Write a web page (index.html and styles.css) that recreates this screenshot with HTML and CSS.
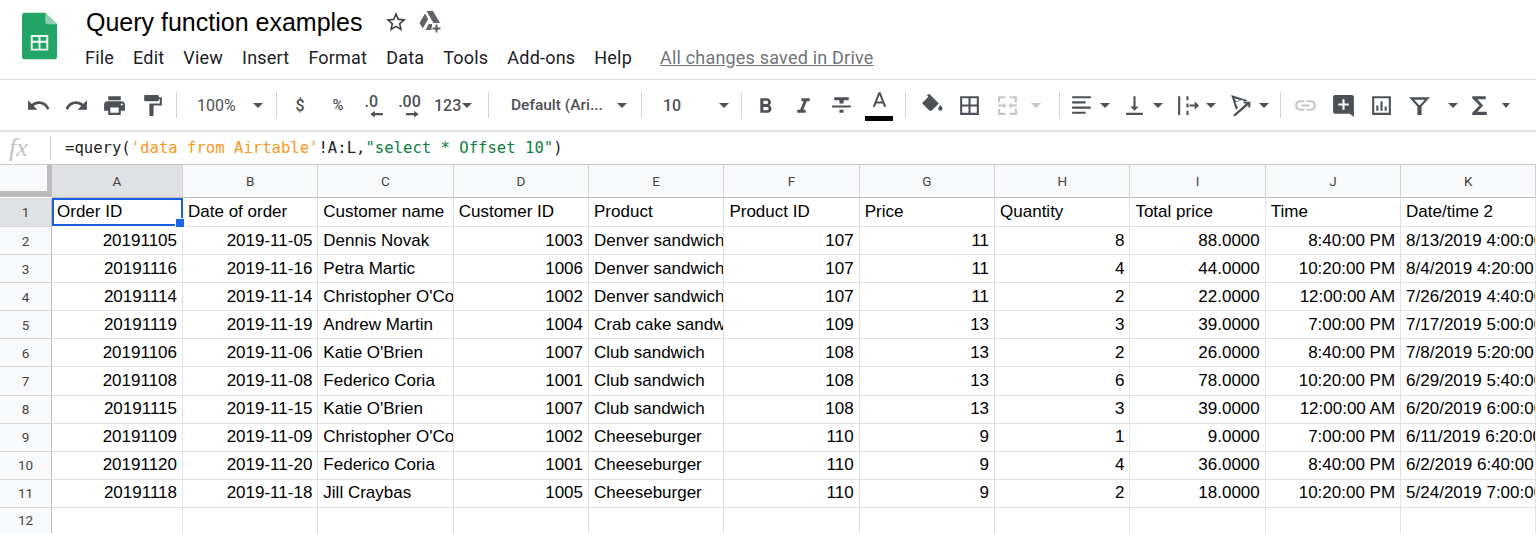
FILE: index.html
```html
<!DOCTYPE html>
<html lang="en">
<head>
<meta charset="utf-8">
<title>Query function examples</title>
<link rel="stylesheet" href="styles.css">
</head>
<body>
<header class="top">
  <svg class="logo" viewBox="0 0 36 48" aria-hidden="true">
    <path d="M3 0H24L36 12V45a3 3 0 0 1-3 3H3a3 3 0 0 1-3-3V3a3 3 0 0 1 3-3z" fill="#23a566"/>
    <path d="M24 0L36 12H27a3 3 0 0 1-3-3z" fill="#8ed1b1"/>
    <path d="M9 23H27V39H9zM11 25V29H17V25zM19 25V29H25V25zM11 31V37H17V31zM19 31V37H25V31z" fill="#f1f8f4" fill-rule="evenodd"/>
  </svg>
  <div class="titles">
    <div class="title-row">
      <span class="doc-name">Query function examples</span>
      <svg class="star" viewBox="0 0 24 24"><path d="M22 9.24l-7.19-.62L12 2 9.19 8.63 2 9.24l5.46 4.73L5.82 21 12 17.27 18.18 21l-1.63-7.03L22 9.24zM12 15.4l-3.76 2.27 1-4.28-3.32-2.88 4.38-.38L12 6.1l1.71 4.04 4.38.38-3.32 2.88 1 4.28L12 15.4z"/></svg>
      <svg class="move" viewBox="0 0 24 24"><path d="M8.5 1H15L22 13H15.4zM7 3.5L10.2 9 4.8 18.5 1.5 13zM7.5 20L10.8 14H14V20z"/><path d="M17 14H20V17H23V20H20V23H17V20H14V17H17z" stroke="#fff" stroke-width="1"/></svg>
    </div>
    <nav class="menu">
      <span>File</span><span>Edit</span><span>View</span><span>Insert</span><span>Format</span><span>Data</span><span>Tools</span><span>Add-ons</span><span>Help</span>
      <a class="saved">All changes saved in Drive</a>
    </nav>
  </div>
</header>

<div class="toolbar">
  <div class="grp g1">
    <span class="btn"><svg viewBox="0 0 24 24"><path d="M12.5 8c-2.65 0-5.05.99-6.9 2.6L2 7v9h9l-3.62-3.62c1.39-1.16 3.16-1.88 5.12-1.88 3.54 0 6.55 2.31 7.6 5.5l2.37-.78C21.08 11.03 17.15 8 12.5 8z"/></svg></span>
    <span class="btn"><svg viewBox="0 0 24 24"><path d="M18.4 10.6C16.55 8.99 14.15 8 11.5 8c-4.65 0-8.58 3.03-9.96 7.22L3.9 16c1.05-3.19 4.05-5.5 7.6-5.5 1.95 0 3.73.72 5.12 1.88L13 16h9V7l-3.6 3.6z"/></svg></span>
    <span class="btn"><svg viewBox="0 0 24 24"><path d="M19 8H5c-1.66 0-3 1.34-3 3v6h4v4h12v-4h4v-6c0-1.66-1.34-3-3-3zm-3 11H8v-5h8v5zm3-7c-.55 0-1-.45-1-1s.45-1 1-1 1 .45 1 1-.45 1-1 1zm-1-9H6v4h12V3z"/></svg></span>
    <span class="btn"><svg viewBox="0 0 24 24"><path d="M18 4V3c0-.55-.45-1-1-1H5c-.55 0-1 .45-1 1v4c0 .55.45 1 1 1h12c.55 0 1-.45 1-1V6h1v4H9v11c0 .55.45 1 1 1h2c.55 0 1-.45 1-1v-9h8V4h-3z"/></svg></span>
  </div>
  <div class="grp g2"><span class="val zoomv">100%</span><i class="arr"></i></div>
  <div class="grp g3">
    <span class="btn txt">$</span>
    <span class="btn txt pct">%</span>
    <span class="btn dec"><svg viewBox="0 0 28 28"><text x="4" y="16" class="dectext">.0</text><path d="M9 22l4-3v2h7v2h-7v2z"/></svg></span>
    <span class="btn dec"><svg viewBox="0 0 28 28"><text x="1" y="16" class="dectext">.00</text><path d="M19 22l-4-3v2H8v2h7v2z"/></svg></span>
    <span class="fmt">123</span><i class="arr"></i>
  </div>
  <div class="grp g4"><span class="val">Default (Ari...</span><i class="arr"></i></div>
  <div class="grp g5"><span class="val">10</span><i class="arr"></i></div>
  <div class="grp g6">
    <span class="btn"><svg viewBox="0 0 24 24"><path d="M15.6 11.8c1-.7 1.65-1.8 1.65-2.8 0-2.25-1.75-4-4-4H7v14h7.04c2.1 0 3.71-1.7 3.71-3.79 0-1.52-.86-2.82-2.15-3.41zM10 7.5h3c.83 0 1.5.67 1.5 1.5s-.67 1.5-1.5 1.5h-3v-3zm3.5 9H10v-3h3.5c.83 0 1.5.67 1.5 1.5s-.67 1.5-1.5 1.5z"/></svg></span>
    <span class="btn"><svg viewBox="0 0 24 24"><path d="M10 5v3h2.21l-3.42 8H6v3h8v-3h-2.21l3.42-8H18V5z"/></svg></span>
    <span class="btn"><svg viewBox="0 0 24 24"><path d="M10 19h4v-3h-4v3zM5 4v3h5v3h4V7h5V4H5zM3 14h18v-2H3v2z"/></svg></span>
    <span class="btn color"><svg viewBox="0 0 24 24"><path d="M11 3L5.5 17h2.25l1.12-3h6.25l1.12 3h2.25L13 3h-2zm-1.38 9L12 5.67 14.38 12H9.62z"/></svg><b class="swatch"></b></span>
  </div>
  <div class="grp g7">
    <span class="btn"><svg viewBox="0 0 24 24"><path d="M10 1l9 9-6.5 6.5a2 2 0 0 1-2.8 0L3.5 10.3a.9.9 0 0 1 0-1.3L9 3.5 7.5 2z"/><path d="M20.500 11.500s-2 2.200-2 3.500a2 2 0 0 0 4 0c0-1.300-2-3.500-2-3.500z"/></svg></span>
    <span class="btn"><svg viewBox="0 0 24 24"><path d="M3 3v18h18V3H3zm8 16H5v-6h6v6zm0-8H5V5h6v6zm8 8h-6v-6h6v6zm0-8h-6V5h6v6z"/></svg></span>
    <span class="btn off"><svg viewBox="0 0 24 24"><path d="M3 3h7v2H5v4H3zM14 3h7v6h-2V5h-5zM3 15h2v4h5v2H3zM19 15h2v6h-7v-2h5zM3 11h5V9l3 3-3 3v-2H3zM21 11h-5V9l-3 3 3 3v-2h5z"/></svg></span>
    <i class="arr off merge-arr"></i>
  </div>
  <div class="grp g8">
    <span class="dd"><svg viewBox="0 0 24 24"><path d="M3 3h18v2H3zM3 8h13v2H3zM3 13h18v2H3zM3 18h13v2H3z"/></svg><i class="arr"></i></span>
    <span class="dd"><svg viewBox="0 0 24 24"><path d="M16 13h-3V3h-2v10H8l4 4 4-4zM4 19v2h16v-2H4z"/></svg><i class="arr"></i></span>
    <span class="dd"><svg viewBox="0 0 24 24"><path d="M3 3h2v18H3zM11 3h2v4h-2zM11 10h2v4h-2zM11 17h2v4h-2zM14 11h5V8l4 4-4 4v-3h-5z"/></svg><i class="arr"></i></span>
    <span class="dd"><svg viewBox="0 0 24 24"><path d="M3 2l16 5-3.200 1.500-2.200-2-6.500 2.600 2.500 5-2 2zM6 5l2 3.200 3.500-1.400zM21.500 8.500V14h-2v-2.500L6.500 22.500 5 21 17.500 10H15V8.500z"/></svg><i class="arr"></i></span>
  </div>
  <div class="grp g9">
    <span class="btn off wide"><svg viewBox="0 0 24 24"><path d="M3.900 12c0-1.710 1.390-3.100 3.100-3.100h4V7H7c-2.760 0-5 2.240-5 5s2.240 5 5 5h4v-1.900H7c-1.710 0-3.100-1.390-3.100-3.100zM8 13h8v-2H8v2zm9-6h-4v1.900h4c1.710 0 3.100 1.390 3.100 3.100s-1.390 3.100-3.100 3.100h-4V17h4c2.760 0 5-2.240 5-5s-2.240-5-5-5z"/></svg></span>
    <span class="btn"><svg viewBox="0 0 24 24"><path d="M21.990 4c0-1.100-.89-2-1.990-2H4c-1.100 0-2 .9-2 2v14c0 1.100.9 2 2 2h14l4 3zM17 12h-4v4h-2v-4H7v-2h4V6h2v4h4z"/></svg></span>
    <span class="btn"><svg viewBox="0 0 24 24"><path d="M3 3h18v18H3zM5 5v14h14V5zM7 12h2v5H7zM11 8h2v9h-2zM15 13h2v4h-2z" fill-rule="evenodd"/></svg></span>
    <span class="btn"><svg viewBox="0 0 24 24"><path d="M2 4H22L14 13V21H10V13zM7 6.500L11.500 11.500H12.500L17 6.500z" fill-rule="evenodd"/></svg></span>
    <i class="arr filter-arr"></i>
    <span class="btn sigma"><svg viewBox="0 0 24 24"><path d="M18 3H5v2l7 7-7 7v2h14v-3h-9l5.500-6L10 6h8z"/></svg></span>
    <i class="arr sum-arr"></i>
  </div>
</div>

<div class="formula">
  <span class="fx">fx</span>
  <code class="expr">=query(<span class="str">'data from Airtable'</span>!A:L,<span class="str2">"select * Offset 10"</span>)</code>
</div>

<div class="sheet">
  <div class="corner"></div>
  <div class="ch sel">A</div><div class="ch">B</div><div class="ch">C</div><div class="ch">D</div><div class="ch">E</div><div class="ch">F</div><div class="ch">G</div><div class="ch">H</div><div class="ch">I</div><div class="ch">J</div><div class="ch">K</div>

  <div class="rh sel first">1</div>
  <div class="c active first">Order ID</div><div class="c first">Date of order</div><div class="c first">Customer name</div><div class="c first">Customer ID</div><div class="c first">Product</div><div class="c first">Product ID</div><div class="c first">Price</div><div class="c first">Quantity</div><div class="c first">Total price</div><div class="c first">Time</div><div class="c first">Date/time 2</div>

  <div class="rh">2</div>
  <div class="c n">20191105</div><div class="c n">2019-11-05</div><div class="c">Dennis Novak</div><div class="c n">1003</div><div class="c">Denver sandwich</div><div class="c n">107</div><div class="c n">11</div><div class="c n">8</div><div class="c n">88.0000</div><div class="c n">8:40:00 PM</div><div class="c">8/13/2019 4:00:00</div>

  <div class="rh">3</div>
  <div class="c n">20191116</div><div class="c n">2019-11-16</div><div class="c">Petra Martic</div><div class="c n">1006</div><div class="c">Denver sandwich</div><div class="c n">107</div><div class="c n">11</div><div class="c n">4</div><div class="c n">44.0000</div><div class="c n">10:20:00 PM</div><div class="c">8/4/2019 4:20:00</div>

  <div class="rh">4</div>
  <div class="c n">20191114</div><div class="c n">2019-11-14</div><div class="c">Christopher O'Connor</div><div class="c n">1002</div><div class="c">Denver sandwich</div><div class="c n">107</div><div class="c n">11</div><div class="c n">2</div><div class="c n">22.0000</div><div class="c n">12:00:00 AM</div><div class="c">7/26/2019 4:40:00</div>

  <div class="rh">5</div>
  <div class="c n">20191119</div><div class="c n">2019-11-19</div><div class="c">Andrew Martin</div><div class="c n">1004</div><div class="c">Crab cake sandwich</div><div class="c n">109</div><div class="c n">13</div><div class="c n">3</div><div class="c n">39.0000</div><div class="c n">7:00:00 PM</div><div class="c">7/17/2019 5:00:00</div>

  <div class="rh">6</div>
  <div class="c n">20191106</div><div class="c n">2019-11-06</div><div class="c">Katie O'Brien</div><div class="c n">1007</div><div class="c">Club sandwich</div><div class="c n">108</div><div class="c n">13</div><div class="c n">2</div><div class="c n">26.0000</div><div class="c n">8:40:00 PM</div><div class="c">7/8/2019 5:20:00</div>

  <div class="rh">7</div>
  <div class="c n">20191108</div><div class="c n">2019-11-08</div><div class="c">Federico Coria</div><div class="c n">1001</div><div class="c">Club sandwich</div><div class="c n">108</div><div class="c n">13</div><div class="c n">6</div><div class="c n">78.0000</div><div class="c n">10:20:00 PM</div><div class="c">6/29/2019 5:40:00</div>

  <div class="rh">8</div>
  <div class="c n">20191115</div><div class="c n">2019-11-15</div><div class="c">Katie O'Brien</div><div class="c n">1007</div><div class="c">Club sandwich</div><div class="c n">108</div><div class="c n">13</div><div class="c n">3</div><div class="c n">39.0000</div><div class="c n">12:00:00 AM</div><div class="c">6/20/2019 6:00:00</div>

  <div class="rh">9</div>
  <div class="c n">20191109</div><div class="c n">2019-11-09</div><div class="c">Christopher O'Connor</div><div class="c n">1002</div><div class="c">Cheeseburger</div><div class="c n">110</div><div class="c n">9</div><div class="c n">1</div><div class="c n">9.0000</div><div class="c n">7:00:00 PM</div><div class="c">6/11/2019 6:20:00</div>

  <div class="rh">10</div>
  <div class="c n">20191120</div><div class="c n">2019-11-20</div><div class="c">Federico Coria</div><div class="c n">1001</div><div class="c">Cheeseburger</div><div class="c n">110</div><div class="c n">9</div><div class="c n">4</div><div class="c n">36.0000</div><div class="c n">8:40:00 PM</div><div class="c">6/2/2019 6:40:00</div>

  <div class="rh">11</div>
  <div class="c n">20191118</div><div class="c n">2019-11-18</div><div class="c">Jill Craybas</div><div class="c n">1005</div><div class="c">Cheeseburger</div><div class="c n">110</div><div class="c n">9</div><div class="c n">2</div><div class="c n">18.0000</div><div class="c n">10:20:00 PM</div><div class="c">5/24/2019 7:00:00</div>

  <div class="rh">12</div>
  <div class="c"></div><div class="c"></div><div class="c"></div><div class="c"></div><div class="c"></div><div class="c"></div><div class="c"></div><div class="c"></div><div class="c"></div><div class="c"></div><div class="c"></div>
</div>
</body>
</html>
```

FILE: styles.css
```css
* { box-sizing: border-box; }
html, body { margin: 0; height: 533px; overflow: hidden; background: #fff; }
body { font-family: "Roboto", "Liberation Sans", sans-serif; color: #000; width: 1536px; }

/* title area */
.top { height: 80px; display: flex; align-items: flex-start; border-bottom: 1px solid #dadada; padding: 12px 0 0 22px; }
.logo { width: 35px; height: 48px; flex: none; }
.titles { margin-left: 29px; margin-top: -4px; }
.title-row { display: flex; align-items: center; height: 28px; }
.doc-name { font-family: "Liberation Sans", sans-serif; font-size: 25px; line-height: 28px; width: 298px; white-space: nowrap; }
.star { width: 24px; height: 24px; fill: #3c4043; }
.move { width: 24px; height: 24px; fill: #5f6368; margin-left: 10px; }
.menu { display: flex; align-items: center; margin-top: 10px; margin-left: -1px; font-size: 18px; line-height: 24px; color: #202124; letter-spacing: .2px; gap: 19px; white-space: nowrap; }
.saved { margin-left: 9px; color: #70757a; text-decoration: underline; }

/* toolbar */
.toolbar { height: 52px; display: flex; align-items: center; padding-left: 19px; border-bottom: 2px solid #e3e4e6; color: #444746; }
.grp { display: flex; align-items: center; height: 100%; position: relative; flex: none; }
.grp + .grp::before { content: ""; position: absolute; left: 0; top: 12px; height: 26px; width: 1px; background: #d3d5d8; }
.g1 { width: 157px; }
.g2 { width: 100px; padding-left: 21px; }
.g3 { width: 212px; padding-left: 5px; }
.g4 { width: 153px; padding-left: 23px; }
.g5 { width: 100px; padding-left: 22px; }
.g6 { width: 164px; padding-left: 5px; }
.g7 { width: 154px; padding-left: 7px; }
.g8 { width: 221px; padding-left: 10px; }
.g9 { flex: 1; padding-left: 6px; }
.btn { width: 38px; height: 30px; display: flex; align-items: center; justify-content: center; flex: none; position: relative; }
.btn svg { width: 25px; height: 25px; fill: #4d5156; }
.arr { display: block; flex: none; width: 0; height: 0; border: 5px solid transparent; border-top: 5.500px solid #4d5156; border-bottom: 0; }
.val { font-size: 16px; color: #4d5156; white-space: nowrap; }
.zoomv { width: 56px; }
.g4 .val { width: 106px; font-weight: 500; font-size: 15.500px; }
.g5 .val { width: 56px; font-weight: 500; }
.txt { font-size: 16px; font-weight: 500; color: #4d5156; }
.pct { font-size: 15px; }
.dec { width: 37px; }
.dec svg { width: 32px; height: 32px; }
.dectext { font: 500 14px "Roboto", sans-serif; fill: #4d5156; }
.fmt { font-size: 16px; font-weight: 500; color: #4d5156; margin-left: 3px; margin-right: 1px; }
.color svg { margin-top: -8px; }
.swatch { position: absolute; left: 5px; right: 5px; bottom: -1px; height: 5px; background: #000; }
.off svg { fill: #c4c6c8; }
.arr.off { border-top-color: #c4c6c8; }
.merge-arr { margin-left: 5px; }
.dd { width: 53px; display: flex; align-items: center; flex: none; }
.dd svg { width: 25px; height: 25px; fill: #4d5156; }
.dd .arr { margin-left: 6px; }
.wide { width: 38px; }
.filter-arr { margin-left: 10px; }
.sigma { margin-left: 2px; }
.sum-arr { margin-left: 4px; border-width: 4px; border-top-width: 5px; }

/* formula bar */
.formula { height: 32px; display: flex; align-items: center; position: relative; }
.fx { width: 51px; padding-left: 9px; font: italic 26px/32px "Liberation Serif", serif; color: #c2c2c2; border-right: 0; height: 24px; line-height: 24px; border-right: 1px solid #cfcfcf; }
.expr { margin-left: 14px; font: 15.600px/32px "DejaVu Sans Mono", "Liberation Mono", monospace; color: #222; white-space: pre; }
.str { color: #f7981d; }
.str2 { color: #0b7f3f; }

/* sheet */
.sheet { display: grid; grid-template-columns: 52px 131px repeat(10, 135.35px); grid-template-rows: 33px 29px repeat(10, 28.1px) 26px; border-top: 1px solid #c4c7c5; font-family: "Liberation Sans", sans-serif; }
.corner { background: #f8f9fa; border-right: 5px solid #bcbcbc; border-bottom: 6px solid #bcbcbc; margin-bottom: 1px; }
.ch, .rh { background: #f8f9fa; color: #444; font: 13.500px "Roboto", sans-serif; display: flex; align-items: center; justify-content: center; }
.ch { border-right: 1px solid #d4d4d4; border-bottom: 1px solid #c0c0c0; }
.rh { border-right: 1px solid #c0c0c0; border-bottom: 1px solid #d4d4d4; background: #f8f9fa; }
.sel { background: #dfe1e5; }
.rh.sel { background: #dfe1e5; }
.c { font-size: 17px; line-height: 26px; padding: 0 5px 0 5px; white-space: nowrap; overflow: hidden; border-right: 1px solid #e2e2e2; border-bottom: 1px solid #e2e2e2; color: #000; display: flex; align-items: center; }
.c.n { justify-content: flex-end; }
.active { position: relative; overflow: visible; z-index: 2; outline: 2px solid #1a5fe0; outline-offset: -2px; height: 28px; padding-left: 5px; }
.active::after { content: ""; position: absolute; right: -3px; bottom: -3px; width: 8px; height: 8px; background: #1a66e8; border: 1px solid #fff; }
```
